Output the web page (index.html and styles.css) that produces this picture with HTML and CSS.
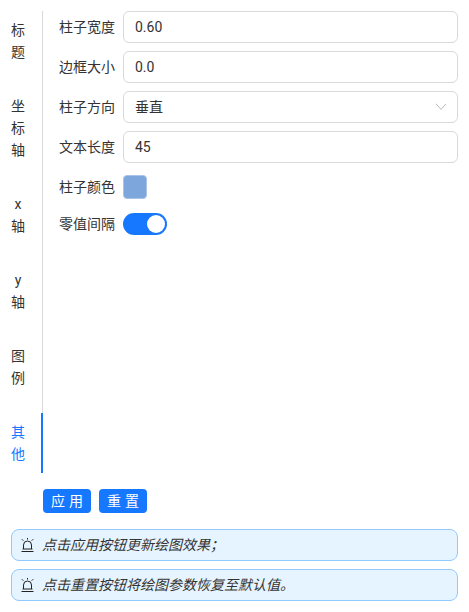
FILE: index.html
```html
<!DOCTYPE html>
<html lang="zh-CN">
<head>
<meta charset="UTF-8">
<title>绘图参数</title>
<link rel="stylesheet" href="styles.css">
</head>
<body>
<div class="panel">
  <div class="tabs">
    <div class="tab"><span class="tab-text">标题</span></div>
    <div class="tab"><span class="tab-text">坐标轴</span></div>
    <div class="tab"><span class="tab-text">x轴</span></div>
    <div class="tab"><span class="tab-text">y轴</span></div>
    <div class="tab"><span class="tab-text">图例</span></div>
    <div class="tab active"><span class="tab-text">其他</span></div>
  </div>

  <div class="form">
    <div class="row">
      <label class="label">柱子宽度</label>
      <div class="input">0.60</div>
    </div>
    <div class="row">
      <label class="label">边框大小</label>
      <div class="input">0.0</div>
    </div>
    <div class="row">
      <label class="label">柱子方向</label>
      <div class="input select">
        <span>垂直</span>
        <svg class="arrow" width="12" height="8" viewBox="0 0 12 8"><path d="M2 0.8 L7 6.4 L12 0.8" fill="none" stroke="#bbb" stroke-width="1"/></svg>
      </div>
    </div>
    <div class="row">
      <label class="label">文本长度</label>
      <div class="input">45</div>
    </div>
    <div class="row color-row">
      <label class="label">柱子颜色</label>
      <div class="swatch"></div>
    </div>
    <div class="row">
      <label class="label">零值间隔</label>
      <div class="switch"><div class="knob"></div></div>
    </div>
  </div>
</div>

<div class="buttons">
  <button class="btn"><span>应用</span></button>
  <button class="btn"><span>重置</span></button>
</div>

<div class="alert">
  <svg class="alert-icon" width="13" height="14" viewBox="0 0 13 14"><path d="M2.5 11 V7 A4 4 0 0 1 10.5 7 V11 M1.5 11 H11.5 M0.5 13.5 H12.5 M6.5 0 V1.5 M0.8 1.2 L2.3 2.7 M12.2 1.2 L10.7 2.7" fill="none" stroke="#222" stroke-width="1"/></svg>
  <span class="alert-text">点击应用按钮更新绘图效果；</span>
</div>
<div class="alert">
  <svg class="alert-icon" width="13" height="14" viewBox="0 0 13 14"><path d="M2.5 11 V7 A4 4 0 0 1 10.5 7 V11 M1.5 11 H11.5 M0.5 13.5 H12.5 M6.5 0 V1.5 M0.8 1.2 L2.3 2.7 M12.2 1.2 L10.7 2.7" fill="none" stroke="#222" stroke-width="1"/></svg>
  <span class="alert-text">点击重置按钮将绘图参数恢复至默认值。</span>
</div>
</body>
</html>
```

FILE: styles.css
```css
body {
  font-family: Roboto, "Noto Sans CJK SC", sans-serif;
  font-size: 14px;
  line-height: 22px;
  margin: 0;
  padding: 11px 11px 0;
  background-color: #fff;
  color: #333;
}

.panel {
  display: flex;
  height: 462px;
}

/* 左侧竖排标签 */
.tabs {
  display: flex;
  flex-direction: column;
  gap: 16px;
  width: 31px;
  border-right: 1px solid #d9d9d9;
}

.tab {
  padding: 8px 0;
  width: 14px;
  text-align: center;
}

.tab-text {
  display: block;
  width: 14px;
  word-break: break-all;
}

.tab.active {
  color: #1677ff;
  width: 32px;
  padding-right: 16px;
  box-sizing: border-box;
  border-right: 2px solid #1677ff;
}

.form {
  flex: 1;
  padding-left: 16px;
}

.row {
  display: flex;
  align-items: center;
  height: 32px;
  margin-bottom: 8px;
}

.color-row {
  margin-bottom: 5px;
}

.label {
  width: 56px;
  margin-right: 8px;
  white-space: nowrap;
}

.input {
  flex: 1;
  box-sizing: border-box;
  height: 32px;
  padding: 4px 11px;
  border: 1px solid #d9d9d9;
  border-radius: 6px;
}

.select {
  display: flex;
  align-items: center;
  justify-content: space-between;
}

.swatch {
  width: 24px;
  height: 24px;
  border-radius: 4px;
  border: 1px solid #a9c4e8;
  box-sizing: border-box;
  background-color: #7da6dc;
}

.switch {
  display: flex;
  justify-content: flex-end;
  align-items: center;
  width: 44px;
  height: 22px;
  padding: 2px;
  box-sizing: border-box;
  border-radius: 11px;
  background-color: #1677ff;
}

.knob {
  width: 18px;
  height: 18px;
  border-radius: 50%;
  background-color: #fff;
}

.buttons {
  display: flex;
  gap: 8px;
  margin: 16px 0 16px 32px;
}

.btn {
  width: 48px;
  height: 24px;
  padding: 0;
  border: none;
  border-radius: 4px;
  background-color: #1677ff;
  color: #fff;
  font-family: inherit;
  font-size: 14px;
  line-height: 22px;
}

.btn span {
  letter-spacing: 4px;
  margin-right: -4px;
}

.alert {
  display: flex;
  align-items: center;
  gap: 8px;
  box-sizing: border-box;
  width: 447px;
  height: 32px;
  margin-bottom: 8px;
  padding: 0 9px;
  background-color: #e6f4ff;
  border: 1px solid #91caff;
  border-radius: 8px;
}

.alert-text {
  font-style: italic;
}
```
